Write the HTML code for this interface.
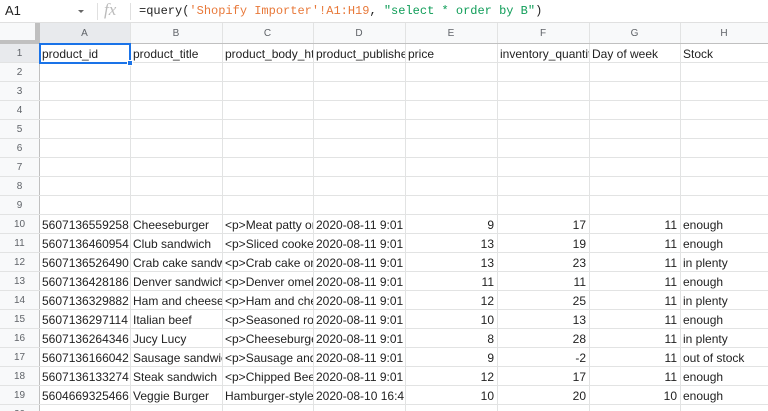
<!DOCTYPE html>
<html><head><meta charset="utf-8"><style>
*{margin:0;padding:0;box-sizing:border-box}
html,body{width:768px;height:411px;overflow:hidden}
body{background:#fff;font-family:"Liberation Sans",Arial,sans-serif;position:relative}
.fb{position:absolute;left:0;top:0;width:768px;height:23px;border-bottom:1px solid #e0e0e0;background:#fff}
.c{position:absolute;white-space:nowrap;overflow:hidden;font-size:12px;color:#222;line-height:20px;height:19px;padding:0 2px}
.r{text-align:right;padding-right:3px}
.hl{position:absolute;left:0;width:768px;height:1px;background:#e2e3e3}
.vl{position:absolute;top:23px;width:1px;height:388px;background:#e2e3e3}
.ch{position:absolute;top:23px;height:21px;font-size:10px;color:#5f6368;text-align:center;line-height:22px}
.rn{position:absolute;left:0;width:39px;font-size:10px;color:#5f6368;text-align:center;line-height:19px;height:19px}
</style></head><body>
<div class="fb">
<div style="position:absolute;left:5px;top:3px;font-size:13px;color:#222">A1</div>
<div style="position:absolute;left:78px;top:10px;width:0;height:0;border-left:3px solid transparent;border-right:3px solid transparent;border-top:3px solid #666"></div>
<div style="position:absolute;left:97px;top:3px;width:1px;height:17px;background:#e0e0e0"></div>
<div style="position:absolute;left:104px;top:0px;font-family:'Liberation Serif',serif;font-style:italic;font-size:17px;color:#bbb">fx</div>
<div style="position:absolute;left:130px;top:3px;width:1px;height:17px;background:#e0e0e0"></div>
<div style="position:absolute;left:139px;top:4px;font-family:'Liberation Mono',monospace;font-size:12px;color:#222;white-space:nowrap">=query(<span style="color:#e8793a">'Shopify Importer'!A1:H19</span>, <span style="color:#0f9d58">"select * order by B"</span>)</div>
</div>
<div style="position:absolute;left:0;top:23px;width:768px;height:21px;background:#f8f9fa"></div>
<div style="position:absolute;left:0;top:23px;width:39px;height:388px;background:#f8f9fa"></div>
<div style="position:absolute;left:39px;top:23px;width:91px;height:21px;background:#e8eaed"></div>
<div style="position:absolute;left:0;top:44px;width:39px;height:19px;background:#e8eaed"></div>
<div style="position:absolute;left:0;top:23px;width:39px;height:21px;border-right:4px solid #c0c0c0;border-bottom:4px solid #c0c0c0"></div>
<div id="g"></div>
<script>
var cols=[39,130,222,313,405,497,589,680,768];
var h='';
var L='ABCDEFGH';
for(var i=0;i<8;i++)h+='<div class="ch" style="left:'+cols[i]+'px;width:'+(cols[i+1]-cols[i])+'px">'+L[i]+'</div>';
for(var i=0;i<cols.length-1;i++)h+='<div class="vl" style="left:'+cols[i]+'px;background:'+(i==0?'#c0c0c0':'#e2e3e3')+'"></div>';
h+='<div class="hl" style="top:43px;background:#c0c0c0"></div>';
for(var r=1;r<=20;r++){var t=44+(r-1)*19;h+='<div class="hl" style="top:'+(t+18)+'px"></div>';h+='<div class="rn" style="top:'+t+'px">'+r+'</div>';}
var hdr=['product_id','product_title','product_body_html','product_published_at','price','inventory_quantity','Day of week','Stock'];
var d=[
['5607136559258','Cheeseburger','<p>Meat patty on','2020-08-11 9:01',9,17,11,'enough'],
['5607136460954','Club sandwich','<p>Sliced cooked','2020-08-11 9:01',13,19,11,'enough'],
['5607136526490','Crab cake sandwich','<p>Crab cake on','2020-08-11 9:01',13,23,11,'in plenty'],
['5607136428186','Denver sandwich','<p>Denver omelet','2020-08-11 9:01',11,11,11,'enough'],
['5607136329882','Ham and cheese','<p>Ham and cheese','2020-08-11 9:01',12,25,11,'in plenty'],
['5607136297114','Italian beef','<p>Seasoned roast','2020-08-11 9:01',10,13,11,'enough'],
['5607136264346','Jucy Lucy','<p>Cheeseburger','2020-08-11 9:01',8,28,11,'in plenty'],
['5607136166042','Sausage sandwich','<p>Sausage and','2020-08-11 9:01',9,-2,11,'out of stock'],
['5607136133274','Steak sandwich','<p>Chipped Beef','2020-08-11 9:01',12,17,11,'enough'],
['5604669325466','Veggie Burger','Hamburger-style','2020-08-10 16:4',10,20,10,'enough']];
function esc(s){return String(s).replace(/&/g,'&amp;').replace(/</g,'&lt;')}
function cell(ci,t,txt,num){h+='<div class="c'+(num?' r':'')+'" style="left:'+(cols[ci]+1)+'px;width:'+(cols[ci+1]-cols[ci]-1)+'px;top:'+t+'px">'+esc(txt)+'</div>';}
for(var i=0;i<8;i++)cell(i,44,hdr[i],false);
for(var r=0;r<d.length;r++){var t=44+(9+r)*19;for(var i=0;i<8;i++)cell(i,t,d[r][i],i>=4&&i<=6);}
h+='<div style="position:absolute;left:39px;top:43px;width:92px;height:21px;border:2px solid #1a73e8"></div>';
h+='<div style="position:absolute;left:127px;top:60px;width:6px;height:6px;background:#1a73e8;border:1px solid #fff"></div>';
document.getElementById('g').innerHTML=h;
</script>
</body></html>
